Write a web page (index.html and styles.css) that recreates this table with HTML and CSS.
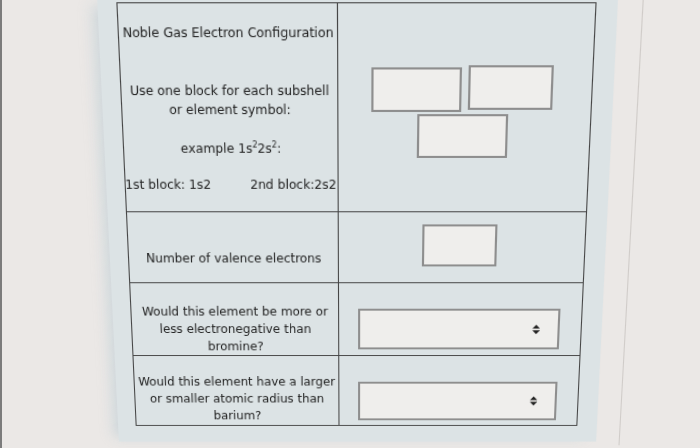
FILE: index.html
```html
<!DOCTYPE html>
<html>
<head>
<meta charset="utf-8">
<title>Noble Gas Electron Configuration</title>
<link rel="stylesheet" href="styles.css">
</head>
<body>
<div class="screen">
  <div class="panel">
    <div class="qtable">
      <div class="cell lbl">
        <p class="t1">Noble Gas Electron Configuration</p>
        <p class="t2">Use one block for each subshell<br>or element symbol:</p>
        <p class="t3">example 1s<sup>2</sup>2s<sup>2</sup>:</p>
        <p class="t4"><span>1st block: 1s2</span><span>2nd block:2s2</span></p>
      </div>
      <div class="cell ans ans1">
        <div class="pair">
          <input class="box b1" type="text">
          <input class="box b2" type="text">
        </div>
        <input class="box b3" type="text">
      </div>

      <div class="cell lbl">
        <p class="t5">Number of valence electrons</p>
      </div>
      <div class="cell ans">
        <input class="box b4" type="text">
      </div>

      <div class="cell lbl">
        <p class="t6">Would this element be more or<br>less electronegative than<br>bromine?</p>
      </div>
      <div class="cell ans">
        <div class="sel s1">
          <svg class="arrows" width="7.2" height="10.7" viewBox="0 0 8 12"><polygon points="0,5 4,0.5 8,5"/><polygon points="0,7 4,11.5 8,7"/></svg>
        </div>
      </div>

      <div class="cell lbl">
        <p class="t7">Would this element have a larger<br>or smaller atomic radius than<br>barium?</p>
      </div>
      <div class="cell ans">
        <div class="sel s2">
          <svg class="arrows" width="7.2" height="10.7" viewBox="0 0 8 12"><polygon points="0,5 4,0.5 8,5"/><polygon points="0,7 4,11.5 8,7"/></svg>
        </div>
      </div>
    </div>
  </div>
  <div class="edge"></div>
</div>
</body>
</html>
```
FILE: styles.css
```css
html, body {
  margin: 0;
  padding: 0;
  overflow: hidden;
  height: 100%;
}
body {
  background: #ebe8e6;
  border-left: 2px solid #7c7c7c;
  box-sizing: border-box;
  font-family: "DejaVu Sans Condensed", "DejaVu Sans", sans-serif;
  color: #222;
}
/* photographed screen: slight tilt away at the bottom */
.screen {
  width: 637.5px;
  height: 442px;
  margin-left: 36.25px;
  display: flex;
  transform-origin: 50% 0;
  transform: perspective(1000px) rotateX(-10.74deg) scale(1.12);
}
.panel {
  margin-left: 86.61px;
  width: 465.18px;
  height: 437.5px;
  box-sizing: border-box;
  padding: 1.79px 0 0 17.86px;
  background: #dce3e5;
  box-shadow: -9px 0 12px -5px rgba(190, 205, 212, 0.7);
}
.edge {
  margin-left: 22.32px;
  width: 0;
  height: 442px;
  border-left: 1px solid #cfcbc8;
}
.qtable {
  display: grid;
  grid-template-columns: 196.43px 231.25px;
  grid-template-rows: 198.21px 71.43px 74.11px 74.11px;
  width: 427.68px;
  border-top: 1px solid #444;
  border-left: 1px solid #444;
}
.cell {
  box-sizing: border-box;
  border-right: 1px solid #444;
  border-bottom: 1px solid #444;
}
.lbl {
  font-size: 12.68px;
  line-height: 17.86px;
  text-align: center;
  white-space: nowrap;
}
.lbl p {
  margin: 0;
}
.lbl .t1 { margin-top: 17.86px; }
.lbl .t2 { margin-top: 36.61px; }
.lbl .t3 { margin-top: 19.64px; }
.lbl .t4 {
  margin-top: 16.96px;
  margin-left: -0.89px;
  padding-right: 0.89px;
  display: flex;
  justify-content: space-between;
}
.lbl .t5 { margin-top: 37.5px; }
.lbl .t6 { margin-top: 19.64px; }
.lbl .t7 { margin-top: 18.75px; }
sup {
  font-size: 8.04px;
  vertical-align: baseline;
  position: relative;
  top: -5.36px;
  line-height: 0;
}
.box {
  display: block;
  box-sizing: border-box;
  margin: 0;
  padding: 0;
  height: 41.96px;
  border: 2px solid #8e8e8e;
  border-radius: 0;
  background: #efeeec;
  outline: none;
}
.ans1 {
  padding: 57.14px 0 0 30.36px;
}
.pair {
  display: flex;
  gap: 5.36px;
  align-items: flex-start;
}
.b1 { width: 82.14px; margin-top: 1.79px; }
.b2 { width: 76.79px; }
.b3 { width: 83.04px; margin: 2.68px 0 0 41.96px; }
.b4 { width: 69.64px; height: 42.86px; margin: 11.61px 0 0 78.57px; }
.sel {
  box-sizing: border-box;
  width: 191.96px;
  height: 41.96px;
  margin-left: 17.86px;
  border: 2px solid #8e8e8e;
  background: #efeeec;
  display: flex;
  align-items: center;
  justify-content: flex-end;
  padding-right: 16.96px;
}
.s1 { margin-top: 25.89px; }
.s2 { margin-top: 27.68px; height: 41.07px; }
.arrows {
  fill: #222;
  display: block;
}
```
